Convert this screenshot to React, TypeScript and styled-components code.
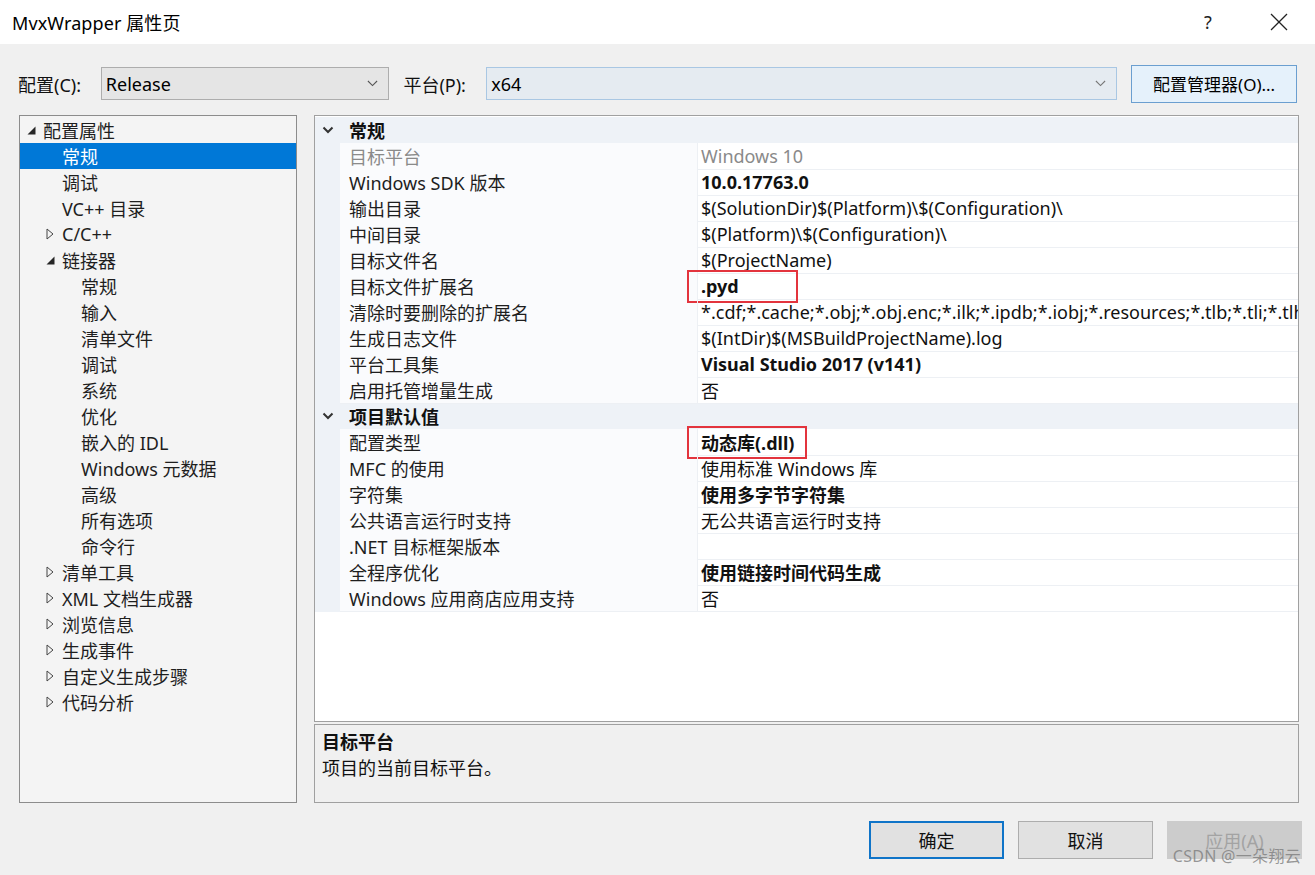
import React from 'react'
import styled, { createGlobalStyle } from 'styled-components'

/* --------------------------------
 * Global
 * -------------------------------- */

const GlobalStyle = createGlobalStyle`
  html, body {
    margin: 0;
    padding: 0;
    background: #f0f0f0;
  }
  body {
    font-family: 'Noto Sans', 'Noto Sans CJK SC', sans-serif;
    font-size: 18px;
    color: #1e1e1e;
  }
  * { box-sizing: border-box; }
`

const FONT = `'Noto Sans', 'Noto Sans CJK SC', sans-serif`

/* --------------------------------
 * Styled Components
 * -------------------------------- */

const Window = styled.div`
  width: 1315px;
  height: 875px;
  background: #f0f0f0;
  display: flex;
  flex-direction: column;
  position: relative;
  overflow: hidden;
`

const TitleBar = styled.div`
  height: 44px;
  background: #ffffff;
  display: flex;
  align-items: center;
  padding: 0 0 0 12px;
`

const Title = styled.div`
  flex: 1;
  font-size: 18px;
  color: #000;
  letter-spacing: 0.1px;
`

const TitleButton = styled.div<{ $width: number }>`
  width: ${({ $width }) => $width}px;
  height: 44px;
  display: flex;
  align-items: center;
  justify-content: center;
  font-size: 18px;
  color: #222;
`

const ConfigRow = styled.div`
  height: 71px;
  display: flex;
  align-items: center;
  padding: 8px 18px 0 18px;
`

const FieldLabel = styled.div<{ $width: number }>`
  width: ${({ $width }) => $width}px;
  font-size: 18px;
  color: #111;
`

const Select = styled.div<{ $width: number; $blue?: boolean }>`
  width: ${({ $width }) => $width}px;
  height: 33px;
  display: flex;
  align-items: center;
  justify-content: space-between;
  padding: 0 10px 0 4px;
  background: ${({ $blue }) => ($blue ? '#e5ebf1' : '#e5e5e5')};
  border: 1px solid ${({ $blue }) => ($blue ? '#a9c7e3' : '#adadad')};
  font-size: 18px;
  color: #000;
`

const Spacer = styled.div<{ $width: number }>`
  width: ${({ $width }) => $width}px;
  flex-shrink: 0;
`

const ManagerButton = styled.div`
  width: 166px;
  height: 38px;
  display: flex;
  align-items: center;
  justify-content: center;
  background: #e5f1fb;
  border: 1px solid #6b9fd0;
  font-size: 17px;
  color: #000;
`

const Main = styled.div`
  display: grid;
  grid-template-columns: 278px 985px;
  column-gap: 17px;
  padding: 0 0 0 19px;
  height: 688px;
`

const Tree = styled.div`
  border: 1px solid #8c8c8c;
  background: #f4f4f4;
  padding-top: 1px;
  display: flex;
  flex-direction: column;
`

const TreeRow = styled.div<{ $level: number; $selected?: boolean }>`
  height: 26px;
  display: flex;
  align-items: center;
  position: relative;
  padding-left: ${({ $level }) => 23 + $level * 19}px;
  background: ${({ $selected }) => ($selected ? '#0078d7' : 'transparent')};
  color: ${({ $selected }) => ($selected ? '#ffffff' : '#1e1e1e')};
  font-size: 18px;
  white-space: nowrap;
`

const TreeToggle = styled.span<{ $level: number }>`
  position: absolute;
  left: ${({ $level }) => 5 + $level * 19}px;
  top: 7px;
  width: 12px;
  height: 12px;
  display: flex;
  align-items: center;
  justify-content: center;
`

const RightColumn = styled.div`
  display: grid;
  grid-template-rows: 607px 79px;
  row-gap: 2px;
`

const Grid = styled.div`
  border: 1px solid #a0a0a0;
  background: #ffffff;
  padding-top: 1px;
  overflow: hidden;
`

const CategoryRow = styled.div`
  height: 26px;
  display: flex;
  align-items: center;
  background: #eef2f7;
`

const Gutter = styled.div`
  width: 25px;
  height: 100%;
  flex-shrink: 0;
  display: flex;
  align-items: center;
  justify-content: center;
  background: #eef2f7;
`

const CategoryName = styled.div`
  padding-left: 9px;
  font-weight: 700;
  font-size: 18px;
  color: #111;
`

const PropRow = styled.div`
  height: 26px;
  display: grid;
  grid-template-columns: 25px 357px 1fr;
`

const PropName = styled.div<{ $disabled?: boolean }>`
  display: flex;
  align-items: center;
  padding-left: 9px;
  background: #fafbfd;
  border-bottom: 1px solid #edf0f4;
  color: ${({ $disabled }) => ($disabled ? '#8a8a8a' : '#1e1e1e')};
  font-size: 18px;
  white-space: nowrap;
`

const PropValue = styled.div<{ $bold?: boolean; $disabled?: boolean }>`
  position: relative;
  display: flex;
  align-items: center;
  padding-left: 3px;
  border-left: 1px solid #edf0f4;
  border-bottom: 1px solid #edf0f4;
  font-weight: ${({ $bold }) => ($bold ? 700 : 400)};
  color: ${({ $disabled }) => ($disabled ? '#8a8a8a' : '#111')};
  font-size: 18px;
  white-space: nowrap;
  overflow: visible;
  min-width: 0;
`

const Highlight = styled.div<{ $width: number }>`
  position: absolute;
  left: -11px;
  top: -3px;
  width: ${({ $width }) => $width}px;
  height: 33px;
  border: 2px solid #e3343d;
  pointer-events: none;
`

const Description = styled.div`
  border: 1px solid #a0a0a0;
  background: #f0f0f0;
  padding: 4px 0 0 7px;
  display: flex;
  flex-direction: column;
`

const DescTitle = styled.div`
  font-weight: 700;
  font-size: 18px;
  line-height: 26px;
  color: #111;
`

const DescText = styled.div`
  font-size: 18px;
  line-height: 26px;
  color: #111;
`

const Footer = styled.div`
  flex: 1;
  display: flex;
  justify-content: flex-end;
  align-items: flex-start;
  gap: 14px;
  padding: 18px 13px 0 0;
`

const Button = styled.div<{ $kind: 'default' | 'normal' | 'disabled' }>`
  width: 135px;
  height: 38px;
  display: flex;
  align-items: center;
  justify-content: center;
  font-size: 18px;
  background: ${({ $kind }) => ($kind === 'disabled' ? '#cccccc' : '#e1e1e1')};
  color: ${({ $kind }) => ($kind === 'disabled' ? '#a3a3a3' : '#111')};
  border: ${({ $kind }) =>
    $kind === 'default'
      ? '2px solid #0f74c8'
      : $kind === 'normal'
        ? '1px solid #adadad'
        : '1px solid #cccccc'};
`

const Watermark = styled.div`
  position: absolute;
  right: 14px;
  bottom: 8px;
  font-family: ${FONT};
  font-size: 16px;
  color: rgba(120, 120, 120, 0.75);
  letter-spacing: 0.3px;
`

/* --------------------------------
 * Icons
 * -------------------------------- */

const Expanded = () => (
  <svg width="9" height="9" viewBox="0 0 9 9">
    <polygon points="8.5,0.5 8.5,8.5 0.5,8.5" fill="#262626" />
  </svg>
)

const Collapsed = () => (
  <svg width="8" height="12" viewBox="0 0 8 12">
    <polygon points="1,1 7,6 1,11" fill="none" stroke="#444" strokeWidth="1" />
  </svg>
)

const Chevron = ({ color = '#333', w = 12 }: { color?: string; w?: number }) => (
  <svg width={w} height={w * 0.6} viewBox="0 0 12 7">
    <polyline points="1,1 6,6 11,1" fill="none" stroke={color} strokeWidth="1.2" />
  </svg>
)

const CategoryChevron = () => (
  <svg width="12" height="8" viewBox="0 0 12 8">
    <polyline points="1.5,1.5 6,6 10.5,1.5" fill="none" stroke="#333" strokeWidth="2" />
  </svg>
)

const CloseIcon = () => (
  <svg width="18" height="18" viewBox="0 0 18 18">
    <line x1="1" y1="1" x2="17" y2="17" stroke="#222" strokeWidth="1.2" />
    <line x1="17" y1="1" x2="1" y2="17" stroke="#222" strokeWidth="1.2" />
  </svg>
)

/* --------------------------------
 * Data
 * -------------------------------- */

type TreeItem = { label: string; level: number; toggle?: 'open' | 'closed'; selected?: boolean }

const treeItems: TreeItem[] = [
  { label: '配置属性', level: 0, toggle: 'open' },
  { label: '常规', level: 1, selected: true },
  { label: '调试', level: 1 },
  { label: 'VC++ 目录', level: 1 },
  { label: 'C/C++', level: 1, toggle: 'closed' },
  { label: '链接器', level: 1, toggle: 'open' },
  { label: '常规', level: 2 },
  { label: '输入', level: 2 },
  { label: '清单文件', level: 2 },
  { label: '调试', level: 2 },
  { label: '系统', level: 2 },
  { label: '优化', level: 2 },
  { label: '嵌入的 IDL', level: 2 },
  { label: 'Windows 元数据', level: 2 },
  { label: '高级', level: 2 },
  { label: '所有选项', level: 2 },
  { label: '命令行', level: 2 },
  { label: '清单工具', level: 1, toggle: 'closed' },
  { label: 'XML 文档生成器', level: 1, toggle: 'closed' },
  { label: '浏览信息', level: 1, toggle: 'closed' },
  { label: '生成事件', level: 1, toggle: 'closed' },
  { label: '自定义生成步骤', level: 1, toggle: 'closed' },
  { label: '代码分析', level: 1, toggle: 'closed' }
]

type Prop = { name: string; value: string; bold?: boolean; disabled?: boolean; box?: number }
type Category = { title: string; props: Prop[] }

const categories: Category[] = [
  {
    title: '常规',
    props: [
      { name: '目标平台', value: 'Windows 10', disabled: true },
      { name: 'Windows SDK 版本', value: '10.0.17763.0', bold: true },
      { name: '输出目录', value: '$(SolutionDir)$(Platform)\\$(Configuration)\\' },
      { name: '中间目录', value: '$(Platform)\\$(Configuration)\\' },
      { name: '目标文件名', value: '$(ProjectName)' },
      { name: '目标文件扩展名', value: '.pyd', bold: true, box: 111 },
      {
        name: '清除时要删除的扩展名',
        value:
          '*.cdf;*.cache;*.obj;*.obj.enc;*.ilk;*.ipdb;*.iobj;*.resources;*.tlb;*.tli;*.tlh;*.tmp;*.rsp;*.pgc;*.pgd;*.meta'
      },
      { name: '生成日志文件', value: '$(IntDir)$(MSBuildProjectName).log' },
      { name: '平台工具集', value: 'Visual Studio 2017 (v141)', bold: true },
      { name: '启用托管增量生成', value: '否' }
    ]
  },
  {
    title: '项目默认值',
    props: [
      { name: '配置类型', value: '动态库(.dll)', bold: true, box: 120 },
      { name: 'MFC 的使用', value: '使用标准 Windows 库' },
      { name: '字符集', value: '使用多字节字符集', bold: true },
      { name: '公共语言运行时支持', value: '无公共语言运行时支持' },
      { name: '.NET 目标框架版本', value: '' },
      { name: '全程序优化', value: '使用链接时间代码生成', bold: true },
      { name: 'Windows 应用商店应用支持', value: '否' }
    ]
  }
]

/* --------------------------------
 * Component
 * -------------------------------- */

export default function App() {
  return (
    <>
      <GlobalStyle />
      <Window>
        <TitleBar>
          <Title>MvxWrapper 属性页</Title>
          <TitleButton $width={70}>?</TitleButton>
          <TitleButton $width={72}>
            <CloseIcon />
          </TitleButton>
        </TitleBar>

        <ConfigRow>
          <FieldLabel $width={83}>配置(C):</FieldLabel>
          <Select $width={289}>
            <span>Release</span>
            <Chevron color="#555" w={11} />
          </Select>
          <Spacer $width={14} />
          <FieldLabel $width={83}>平台(P):</FieldLabel>
          <Select $width={632} $blue>
            <span>x64</span>
            <Chevron color="#777" w={11} />
          </Select>
          <Spacer $width={14} />
          <ManagerButton>配置管理器(O)...</ManagerButton>
        </ConfigRow>

        <Main>
          <Tree>
            {treeItems.map((item, idx) => (
              <TreeRow key={idx} $level={item.level} $selected={item.selected}>
                {item.toggle && (
                  <TreeToggle $level={item.level}>
                    {item.toggle === 'open' ? <Expanded /> : <Collapsed />}
                  </TreeToggle>
                )}
                {item.label}
              </TreeRow>
            ))}
          </Tree>

          <RightColumn>
            <Grid>
              {categories.map((cat) => (
                <React.Fragment key={cat.title}>
                  <CategoryRow>
                    <Gutter>
                      <CategoryChevron />
                    </Gutter>
                    <CategoryName>{cat.title}</CategoryName>
                  </CategoryRow>
                  {cat.props.map((p) => (
                    <PropRow key={p.name}>
                      <Gutter />
                      <PropName $disabled={p.disabled}>{p.name}</PropName>
                      <PropValue $bold={p.bold} $disabled={p.disabled}>
                        {p.value}
                        {p.box && <Highlight $width={p.box} />}
                      </PropValue>
                    </PropRow>
                  ))}
                </React.Fragment>
              ))}
            </Grid>

            <Description>
              <DescTitle>目标平台</DescTitle>
              <DescText>项目的当前目标平台。</DescText>
            </Description>
          </RightColumn>
        </Main>

        <Footer>
          <Button $kind="default">确定</Button>
          <Button $kind="normal">取消</Button>
          <Button $kind="disabled">应用(A)</Button>
        </Footer>

        <Watermark>CSDN @一朵翔云</Watermark>
      </Window>
    </>
  )
}
